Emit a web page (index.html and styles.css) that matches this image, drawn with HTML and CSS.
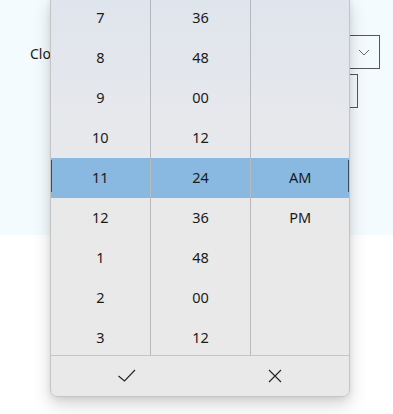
FILE: index.html
```html
<!DOCTYPE html>
<html>
<head>
<meta charset="utf-8">
<link rel="stylesheet" href="styles.css">
</head>
<body>
<div class="panel">
  <div class="field-row">
    <span class="label">Clock</span>
    <div class="combo"><svg class="chev" width="12" height="7" viewBox="0 0 12 7"><path d="M1 1 L6 6 L11 1" fill="none" stroke="#666" stroke-width="1"/></svg></div>
  </div>
  <div class="field-row second">
    <div class="box"></div>
  </div>
</div>

<div class="picker">
  <div class="list">
    <div class="col">
      <div class="cell">7</div><div class="cell">8</div><div class="cell">9</div><div class="cell">10</div>
      <div class="cell sel">11</div><div class="cell">12</div><div class="cell">1</div><div class="cell">2</div><div class="cell">3</div>
    </div>
    <div class="col mid">
      <div class="cell">36</div><div class="cell">48</div><div class="cell">00</div><div class="cell">12</div>
      <div class="cell sel">24</div><div class="cell">36</div><div class="cell">48</div><div class="cell">00</div><div class="cell">12</div>
    </div>
    <div class="col last">
      <div class="cell"></div><div class="cell"></div><div class="cell"></div><div class="cell"></div>
      <div class="cell sel">AM</div><div class="cell">PM</div><div class="cell"></div><div class="cell"></div><div class="cell"></div>
    </div>
    <span class="edge left"></span><span class="edge right"></span>
  </div>
  <div class="footer">
    <div class="btn"><svg width="20" height="14" viewBox="0 0 20 14"><path d="M2.5 7 L8.5 12 L19 1" fill="none" stroke="#222" stroke-width="1.1"/></svg></div>
    <div class="btn"><svg width="14" height="14" viewBox="0 0 14 14"><path d="M1 1 L13 13 M13 1 L1 13" fill="none" stroke="#222" stroke-width="1.1"/></svg></div>
  </div>
</div>
</body>
</html>
```

FILE: styles.css
```css
html, body {
  margin: 0;
  padding: 0;
  background: #ffffff;
  font-family: "Noto Sans", "Open Sans", sans-serif;
  color: #1a1a1a;
}
body {
  width: 393px;
  height: 414px;
  position: relative;
  overflow: hidden;
}
.panel {
  height: 235px;
  background: #f4fbfe;
  padding-top: 35px;
  box-sizing: border-box;
}
.field-row {
  display: flex;
  align-items: center;
  height: 34px;
  padding-left: 30px;
  padding-right: 13px;
}
.field-row.second {
  margin-top: 5px;
  padding-right: 35px;
  justify-content: flex-end;
}
.label {
  font-size: 14px;
  flex: 1;
  padding-top: 3px;
}
.combo {
  width: 200px;
  height: 32px;
  border: 1px solid #555;
  display: flex;
  align-items: center;
  justify-content: flex-end;
  padding-right: 9px;
  box-sizing: content-box;
}
.box {
  width: 200px;
  height: 32px;
  border: 1px solid #555;
}
.picker {
  position: absolute;
  left: 50px;
  top: -3px;
  width: 298px;
  border: 1px solid #c4c4c4;
  border-radius: 0 0 7px 7px;
  background: linear-gradient(180deg, #dfe5ed 0%, #e6e8ec 30%, #e9e9e9 60%, #e9e9e9 100%);
  box-shadow: 0 8px 18px rgba(0,0,0,0.16), 0 2px 6px rgba(0,0,0,0.08);
}
.list {
  position: relative;
  height: 357px;
  overflow: hidden;
  display: flex;
}
.col {
  width: 99px;
  display: flex;
  flex-direction: column;
}
.col.mid {
  width: 100px;
  border-left: 1px solid rgba(0,0,0,0.2);
}
.col.last {
  width: 98px;
  border-left: 1px solid rgba(0,0,0,0.2);
}
.cell {
  height: 40px;
  box-sizing: border-box;
  padding-bottom: 3px;
  flex: none;
  display: flex;
  align-items: center;
  justify-content: center;
  font-size: 14.5px;
}
.cell.sel {
  background: #89b9e1;
}
.edge {
  position: absolute;
  top: 162px;
  width: 2px;
  height: 32px;
  background: #3c4b5c;
}
.edge.left { left: -1px; }
.edge.right { right: -1px; }
.footer {
  height: 40px;
  border-top: 1px solid #c6c6c6;
  display: flex;
}
.btn {
  flex: 1;
  display: flex;
  align-items: center;
  justify-content: center;
}
```
